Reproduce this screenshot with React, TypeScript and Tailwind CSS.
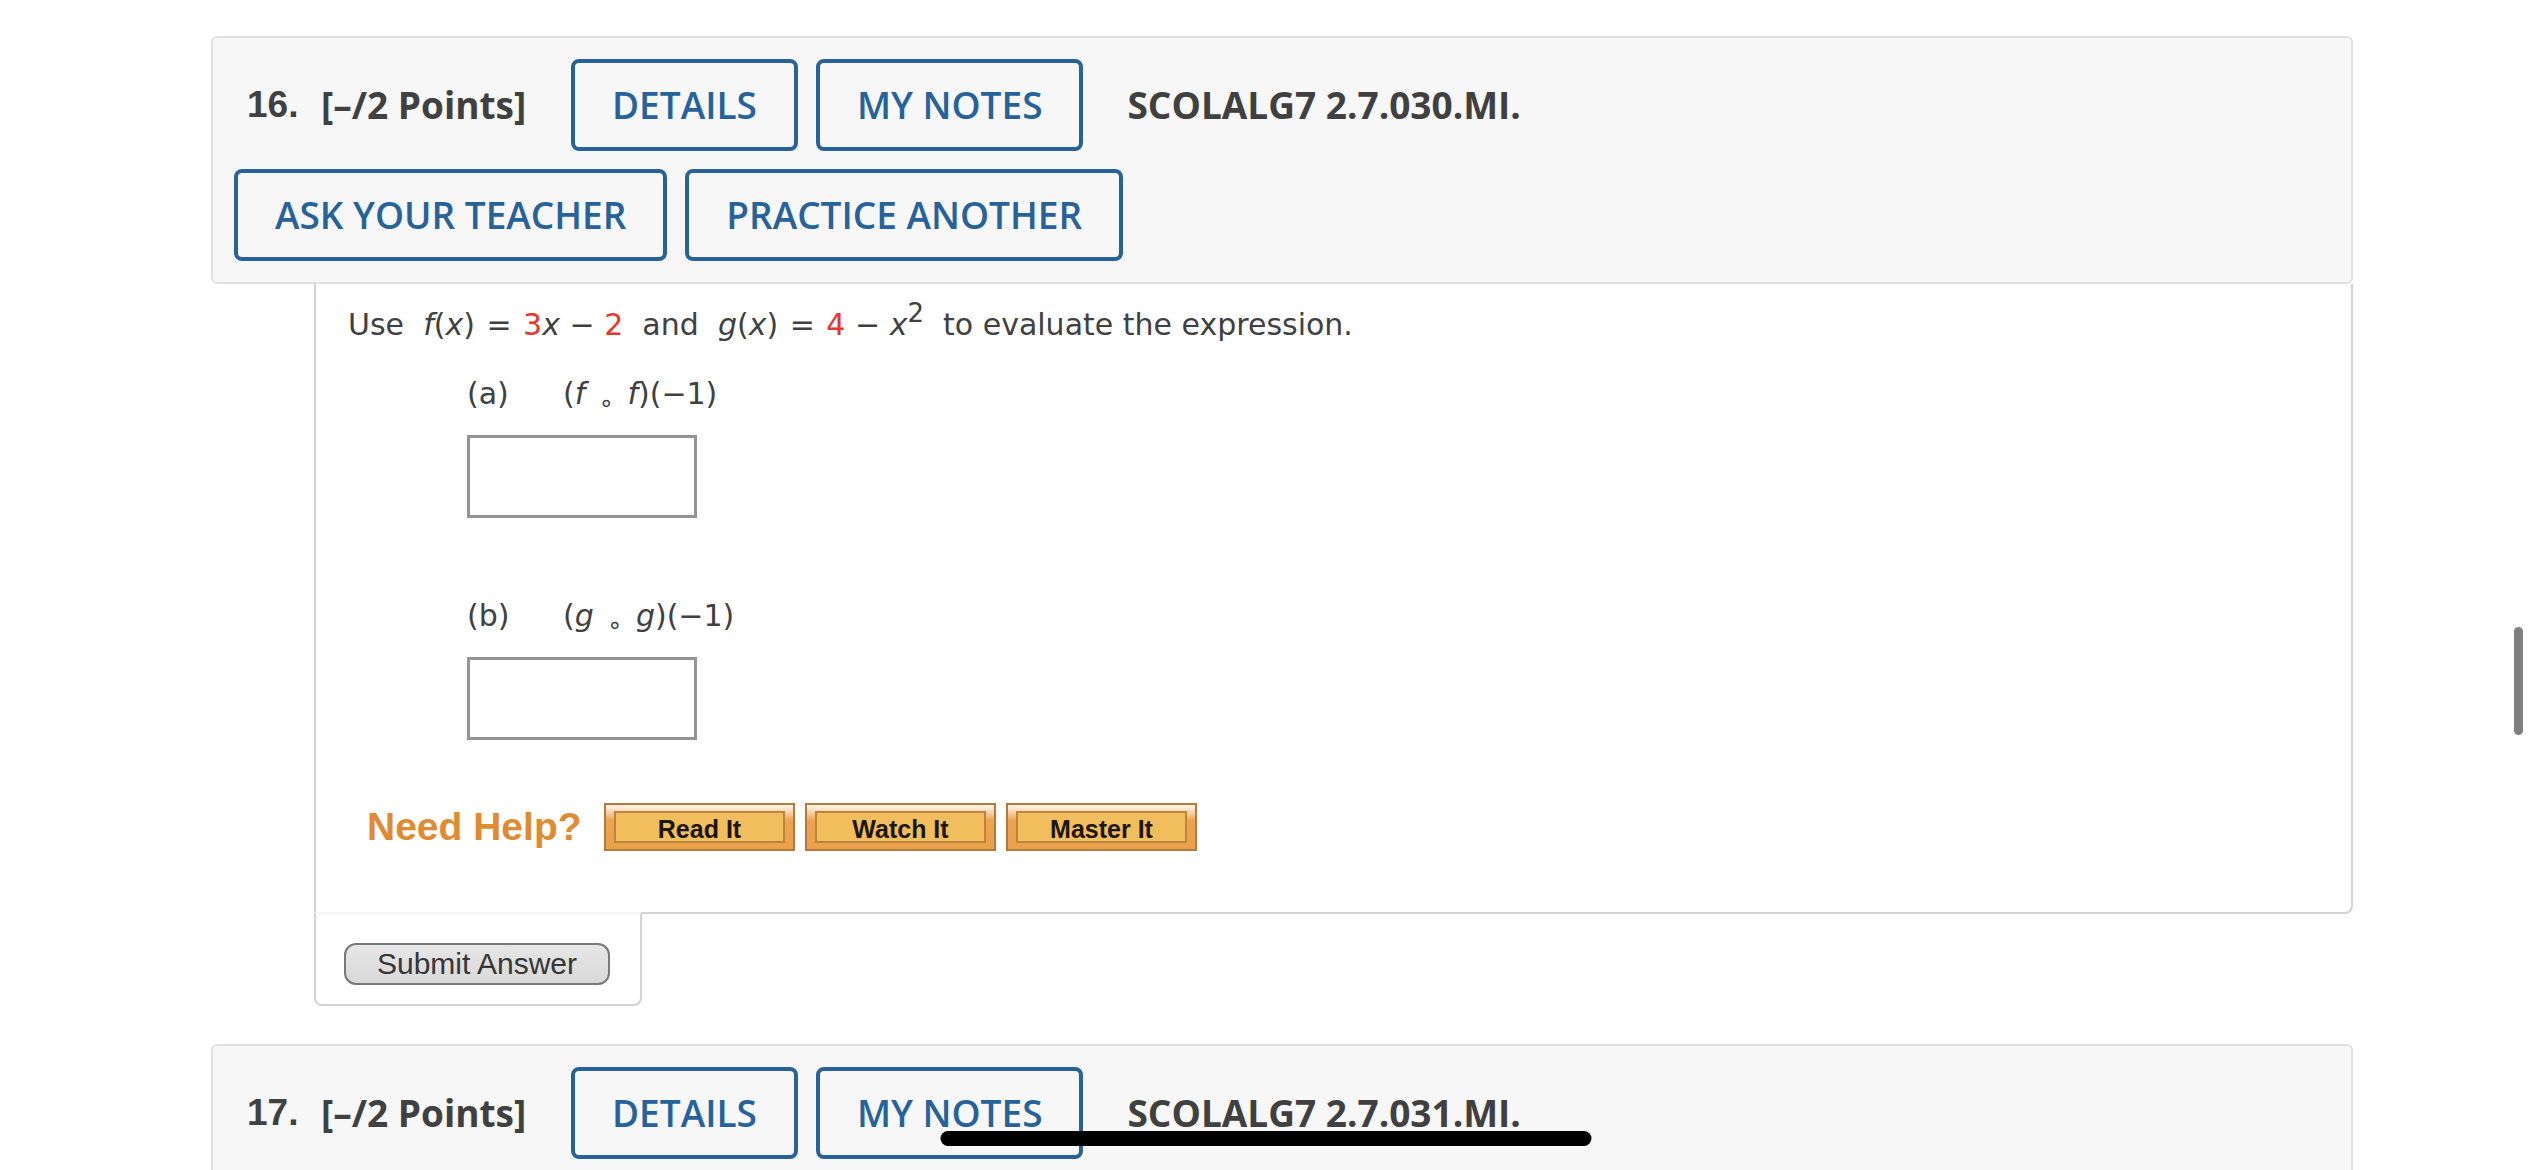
import { useState } from 'react';

interface QuestionHeaderProps {
  number: number;
  points: string;
  code: string;
  actions?: string[];
}

const helpLinks = ['Read It', 'Watch It', 'Master It'];

function OutlineButton({ label }: { label: string }) {
  return (
    <button
      type="button"
      className="h-[92px] px-[37px] border-4 border-[#28629a] rounded-lg text-[#28629a] text-[37px] leading-[50px] font-semibold whitespace-nowrap"
    >
      {label}
    </button>
  );
}

function QuestionHeader({ number, points, code, actions = [] }: QuestionHeaderProps) {
  return (
    <header className="flex flex-col gap-[18px] p-[21px] border-2 border-[#e1e1e1] rounded-md bg-[#f7f7f7] font-['Open_Sans',sans-serif]">
      <div className="flex items-center">
        <h2 className="flex items-center pl-[13px] w-[337px] text-[37px] leading-[50px] font-bold">
          <span className="w-[74px] font-['Liberation_Sans',Arial,sans-serif]">{number}.</span>
          <span>{points}</span>
        </h2>
        <div className="flex gap-[18px]">
          <OutlineButton label="DETAILS" />
          <OutlineButton label="MY NOTES" />
        </div>
        <strong className="ml-11 text-[37px] leading-[50px] font-bold">{code}</strong>
      </div>
      {actions.length > 0 && (
        <div className="flex gap-[18px]">
          {actions.map((action) => (
            <OutlineButton key={action} label={action} />
          ))}
        </div>
      )}
    </header>
  );
}

interface PartProps {
  id: string;
  fn: string;
  value: string;
  onChange: (value: string) => void;
}

function QuestionPart({ id, fn, value, onChange }: PartProps) {
  return (
    <div className="flex flex-col items-start gap-[23px]">
      <label htmlFor={`part-${id}`} className="flex leading-[36px]">
        <span className="w-24">({id})</span>
        <span className="whitespace-pre">
          (<i>{fn}</i> <span className="mx-1 align-sub text-2xl leading-[0]">∘</span> <i>{fn}</i>)(−1)
        </span>
      </label>
      <input
        id={`part-${id}`}
        type="text"
        value={value}
        onChange={(e) => onChange(e.target.value)}
        className="w-[230px] h-[83px] px-3 border-3 border-[#949494] bg-white"
      />
    </div>
  );
}

export default function App() {
  const [answers, setAnswers] = useState({ a: '', b: '' });

  return (
    <div className="relative h-screen overflow-hidden bg-white pt-9 pl-[211px] pr-[179px] text-[#404040]">
      <main>
        <section>
          <QuestionHeader
            number={16}
            points="[–/2 Points]"
            code="SCOLALG7 2.7.030.MI."
            actions={['ASK YOUR TEACHER', 'PRACTICE ANOTHER']}
          />
          <form className="ml-[103px]" onSubmit={(e) => e.preventDefault()}>
            <div className="border-2 border-t-0 border-[#d3d3d3] rounded-br-lg pt-[23px] pl-8 pb-[61px] font-['DejaVu_Sans',sans-serif] text-[30px]">
              <p className="leading-[36px] whitespace-pre">
                Use  <i>f</i>(<i>x</i>) <span className="px-[2px]">=</span> <span className="text-[#e9352b]">3</span><i>x</i> − <span className="text-[#e9352b]">2</span>  and  <i>g</i>(<i>x</i>) <span className="px-[2px]">=</span> <span className="text-[#e9352b]">4</span> − <i>x</i><sup className="text-[26px] leading-[0]">2</sup>  to evaluate the expression.
              </p>

              <div className="flex flex-col gap-20 mt-[33px] pl-[119px]">
                <QuestionPart id="a" fn="f" value={answers.a} onChange={(a) => setAnswers({ ...answers, a })} />
                <QuestionPart id="b" fn="g" value={answers.b} onChange={(b) => setAnswers({ ...answers, b })} />
              </div>

              <div className="flex items-center mt-[63px] pl-[19px] font-['Liberation_Sans',Arial,sans-serif] font-bold">
                <span className="w-[237px] text-[39px] leading-[48px] text-[#e08b31]">Need Help?</span>
                <div className="flex gap-[10px]">
                  {helpLinks.map((label) => (
                    <button
                      key={label}
                      type="button"
                      className="w-[191px] h-12 px-2 py-[6px] border-2 border-[#b47a3c] bg-linear-to-b from-[#fdeedd] from-5% via-[#eda350] via-35% to-[#eba04a]"
                    >
                      <span className="flex h-full items-center justify-center border-2 border-[#b8863f] bg-[#f2bd5c] pt-1 text-[25px] leading-[28px] text-[#1a1608]">
                        {label}
                      </span>
                    </button>
                  ))}
                </div>
              </div>
            </div>

            {/* onglet collé sous le cadre de la question */}
            <div className="relative -mt-[2px] w-[328px] pt-[29px] px-7 pb-[19px] border-2 border-t-[#f5f5f5] border-[#d3d3d3] rounded-b-lg bg-white">
              <button
                type="submit"
                className="w-[266px] h-[42px] border-2 border-[#787878] rounded-xl bg-linear-to-b from-[#e6e6e6] to-[#d9d9d9] font-['Liberation_Sans',Arial,sans-serif] text-[30px] leading-[36px] text-[#363636]"
              >
                Submit Answer
              </button>
            </div>
          </form>
        </section>

        <section className="mt-[38px]">
          <QuestionHeader number={17} points="[–/2 Points]" code="SCOLALG7 2.7.031.MI." />
        </section>
      </main>

      <div className="absolute right-[9px] top-[627px] w-[9px] h-[108px] rounded-full bg-[#808080]" />
      <div className="absolute bottom-6 left-1/2 -translate-x-1/2 w-[651px] h-[15px] rounded-full bg-black" />
    </div>
  );
}
